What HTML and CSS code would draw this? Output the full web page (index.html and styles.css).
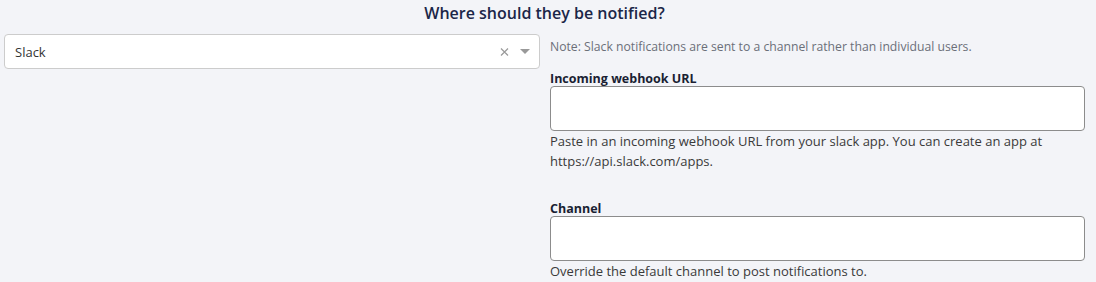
FILE: index.html
```html
<!DOCTYPE html>
<html lang="en">
<head>
<meta charset="utf-8">
<title>Notification channel</title>
<link rel="stylesheet" href="styles.css">
</head>
<body>
<div class="page">
  <h2 class="title">Where should they be notified?</h2>
  <div class="row">
    <div class="col-left">
      <div class="select">
        <span class="select-value">Slack</span>
        <span class="select-icons">
          <svg class="clear" width="9" height="8" viewBox="0 0 9 8"><path d="M1 0.5 L8 7.5 M8 0.5 L1 7.5" stroke="#9a9a9a" stroke-width="1.2" fill="none"/></svg>
          <svg class="arrow" width="10" height="5" viewBox="0 0 10 5"><path d="M0 0 H10 L5 5 Z" fill="#999"/></svg>
        </span>
      </div>
    </div>
    <div class="col-right">
      <p class="note">Note: Slack notifications are sent to a channel rather than individual users.</p>
      <div class="field">
        <label class="label">Incoming webhook URL</label>
        <input class="input" type="text">
        <p class="help">Paste in an incoming webhook URL from your slack app. You can create an app at https://api.slack.com/apps.</p>
      </div>
      <div class="field field-second">
        <label class="label">Channel</label>
        <input class="input" type="text">
        <p class="help">Override the default channel to post notifications to.</p>
      </div>
    </div>
  </div>
</div>
</body>
</html>
```
FILE: styles.css
```css
* { box-sizing: border-box; }
html, body {
  margin: 0;
  padding: 0;
  background: #f3f4f8;
  font-family: "Open Sans", "Noto Sans", "Liberation Sans", sans-serif;
}
.page {
  padding: 2px 11px 0 4px;
}
.title {
  margin: 0 0 10px;
  text-align: center;
  font-size: 16px;
  line-height: 22px;
  font-weight: 600;
  color: #1b2648;
}
.row {
  display: grid;
  grid-template-columns: 536px 1fr;
  column-gap: 10px;
}
.select {
  height: 35px;
  background: #fff;
  border: 1px solid #cccccc;
  border-radius: 4px;
  display: flex;
  align-items: center;
  justify-content: space-between;
  padding: 0 9px 0 10px;
}
.select-value {
  font-size: 13px;
  color: #333;
}
.select-icons {
  display: flex;
  align-items: center;
  gap: 11px;
}
.clear { margin-top: 1px; }
.note {
  margin: 0 0 13px;
  padding-top: 3px;
  font-size: 12.2px;
  line-height: 20px;
  color: #6b6f78;
}
.field {
  display: flex;
  flex-direction: column;
}
.field-second {
  margin-top: 29px;
}
.label {
  padding-top: 1px;
  font-size: 12.5px;
  line-height: 15px;
  font-weight: 700;
  color: #1a1f33;
}
.input {
  height: 45px;
  margin: 0;
  background: #fff;
  border: 1px solid #8c8c8c;
  border-radius: 4px;
  font: inherit;
}
.help {
  margin: 0;
  font-size: 13px;
  line-height: 20px;
  color: #3a3a3a;
}
```
